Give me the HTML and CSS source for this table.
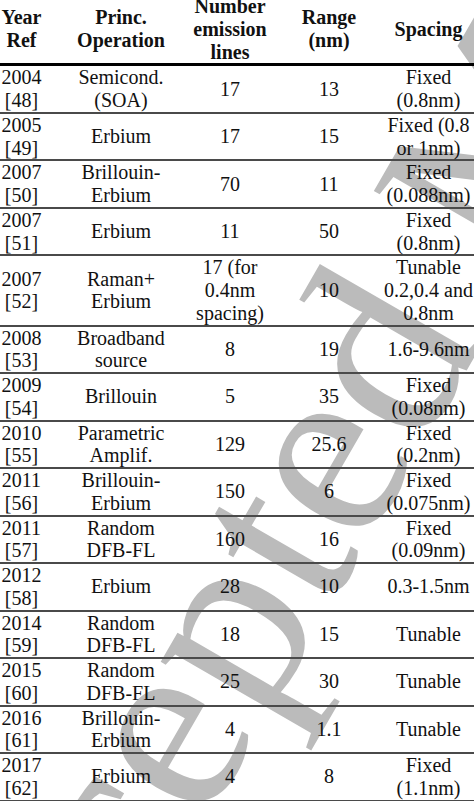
FILE: index.html
```html
<!DOCTYPE html>
<html>
<head>
<meta charset="utf-8">
<link rel="stylesheet" href="styles.css">
</head>
<body>
<div class="page">
  <div class="watermark">Accepted Manuscript</div>
  <table class="tbl">
    <colgroup>
      <col class="c1"><col class="c2"><col class="c3"><col class="c4"><col class="c5">
    </colgroup>
    <thead>
      <tr>
        <th>Year<br>Ref</th>
        <th>Princ.<br>Operation</th>
        <th>Number<br>emission<br>lines</th>
        <th>Range<br>(nm)</th>
        <th>Spacing</th>
      </tr>
    </thead>
    <tbody>
      <tr><td>2004<br>[48]</td><td>Semicond.<br>(SOA)</td><td>17</td><td>13</td><td>Fixed<br>(0.8nm)</td></tr>
      <tr><td>2005<br>[49]</td><td>Erbium</td><td>17</td><td>15</td><td>Fixed (0.8<br>or 1nm)</td></tr>
      <tr><td>2007<br>[50]</td><td>Brillouin-<br>Erbium</td><td>70</td><td>11</td><td>Fixed<br>(0.088nm)</td></tr>
      <tr><td>2007<br>[51]</td><td>Erbium</td><td>11</td><td>50</td><td>Fixed<br>(0.8nm)</td></tr>
      <tr><td>2007<br>[52]</td><td>Raman+<br>Erbium</td><td>17 (for<br>0.4nm<br>spacing)</td><td>10</td><td>Tunable<br>0.2,0.4 and<br>0.8nm</td></tr>
      <tr><td>2008<br>[53]</td><td>Broadband<br>source</td><td>8</td><td>19</td><td>1.6-9.6nm</td></tr>
      <tr><td>2009<br>[54]</td><td>Brillouin</td><td>5</td><td>35</td><td>Fixed<br>(0.08nm)</td></tr>
      <tr><td>2010<br>[55]</td><td>Parametric<br>Amplif.</td><td>129</td><td>25.6</td><td>Fixed<br>(0.2nm)</td></tr>
      <tr><td>2011<br>[56]</td><td>Brillouin-<br>Erbium</td><td>150</td><td>6</td><td>Fixed<br>(0.075nm)</td></tr>
      <tr><td>2011<br>[57]</td><td>Random<br>DFB-FL</td><td>160</td><td>16</td><td>Fixed<br>(0.09nm)</td></tr>
      <tr><td>2012<br>[58]</td><td>Erbium</td><td>28</td><td>10</td><td>0.3-1.5nm</td></tr>
      <tr><td>2014<br>[59]</td><td>Random<br>DFB-FL</td><td>18</td><td>15</td><td>Tunable</td></tr>
      <tr><td>2015<br>[60]</td><td>Random<br>DFB-FL</td><td>25</td><td>30</td><td>Tunable</td></tr>
      <tr><td>2016<br>[61]</td><td>Brillouin-<br>Erbium</td><td>4</td><td>1.1</td><td>Tunable</td></tr>
      <tr><td>2017<br>[62]</td><td>Erbium</td><td>4</td><td>8</td><td>Fixed<br>(1.1nm)</td></tr>
    </tbody>
  </table>
</div>
</body>
</html>
```
FILE: styles.css
```css
html, body {
  margin: 0;
  padding: 0;
  background: #ffffff;
}
body {
  width: 474px;
  height: 801px;
  overflow: hidden;
  font-family: "Liberation Serif", "Times New Roman", serif;
  color: #111111;
}
.page {
  position: relative;
  width: 474px;
  height: 801px;
  overflow: hidden;
}
.watermark {
  position: absolute;
  left: -6px;
  top: 971px;
  z-index: 0;
  font-family: "Liberation Serif", "Times New Roman", serif;
  font-size: 260px;
  line-height: 1;
  color: #bbbbbb;
  white-space: nowrap;
  transform-origin: 0 217.75px;
  transform: rotate(-60deg);
}
.tbl {
  position: relative;
  z-index: 1;
  border-collapse: collapse;
  table-layout: fixed;
  width: 516px;
  margin-left: -28px;
  margin-top: -5px;
  font-size: 20px;
  line-height: 22.75px;
  text-align: center;
}
.c1 { width: 99px; }
.c2 { width: 100px; }
.c3 { width: 118px; }
.c4 { width: 80px; }
.c5 { width: 119px; }
.tbl th {
  font-weight: bold;
  padding: 0;
  vertical-align: middle;
  white-space: nowrap;
  border-bottom: 3px solid #000000;
}
.tbl td {
  padding: 0;
  vertical-align: middle;
  white-space: nowrap;
  border-bottom: 2px solid #4a4a4a;
}
```
